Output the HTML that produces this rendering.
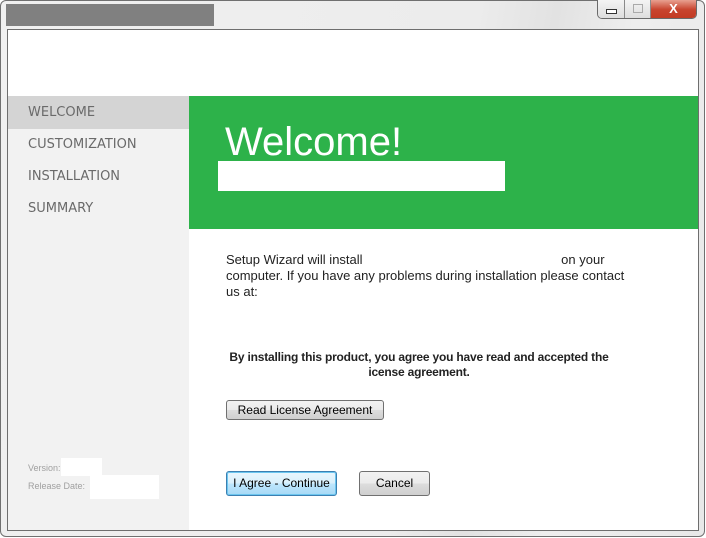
<!DOCTYPE html>
<html><head><meta charset="utf-8"><style>
*{margin:0;padding:0;box-sizing:border-box}
body{width:706px;height:538px;overflow:hidden;background:#fff;font-family:"Liberation Sans",sans-serif;position:relative}
.abs{position:absolute}
#frame{left:0;top:0;width:705px;height:537px;border:1px solid #707070;border-radius:6px;background:linear-gradient(100deg,#f0f0f0 0%,#ececec 60%,#e2e2e2 70%,#eeeeee 80%,#e8e8e8 100%)}
#client{left:7px;top:29px;width:692px;height:502px;border:1px solid #6e6e6e;background:#fff}
.btn{border:1px solid #707070;border-radius:3px;background:linear-gradient(#f2f2f2,#ebebeb 50%,#dddddd 51%,#cfcfcf);font-size:12px;color:#000;text-align:center}
.nav{left:28px;font-size:13px;color:#6a6a6a;font-family:"DejaVu Sans","Liberation Sans",sans-serif;letter-spacing:0}
</style></head><body>
<div id="frame" class="abs"></div>
<div class="abs" style="left:6px;top:4px;width:208px;height:22px;background:#808080"></div>
<div class="abs" style="left:597px;top:0;width:100px;height:19px;border:1px solid #6a6a6a;border-top:none;border-radius:0 0 5px 5px;overflow:hidden;display:flex">
 <div style="width:27px;height:19px;background:linear-gradient(#f4f4f4,#dcdcdc);border-right:1px solid #8a8a8a;position:relative"><div style="position:absolute;left:8px;top:9px;width:11px;height:5px;border:1px solid #333;background:#fff"></div></div>
 <div style="width:26px;height:19px;background:linear-gradient(#f4f4f4,#dcdcdc);border-right:1px solid #8a8a8a;position:relative"><div style="position:absolute;left:8px;top:4px;width:10px;height:9px;border:1px solid #aaa"></div></div>
 <div style="flex:1;height:19px;background:linear-gradient(#e8a090,#c8452f 50%,#c23a22);color:#fff;font-weight:bold;font-size:13px;text-align:center;line-height:18px">X</div>
</div>
<div id="client" class="abs"></div>
<div class="abs" style="left:8px;top:96px;width:181px;height:434px;background:#f2f2f2"></div>
<div class="abs" style="left:8px;top:96px;width:181px;height:33px;background:#d4d4d4"></div>
<div class="abs nav" style="top:105px">WELCOME</div>
<div class="abs nav" style="top:137px">CUSTOMIZATION</div>
<div class="abs nav" style="top:169px">INSTALLATION</div>
<div class="abs nav" style="top:201px">SUMMARY</div>
<div class="abs" style="left:28px;top:463px;font-size:9px;color:#a0a0a0">Version:</div>
<div class="abs" style="left:61px;top:458px;width:41px;height:18px;background:#fff"></div>
<div class="abs" style="left:28px;top:481px;font-size:9px;color:#a0a0a0">Release Date:</div>
<div class="abs" style="left:90px;top:475px;width:69px;height:24px;background:#fff"></div>
<div class="abs" style="left:189px;top:96px;width:509px;height:133px;background:#2db24a"></div>
<div class="abs" style="left:225px;top:119px;font-size:40px;color:#fff;line-height:46px">Welcome!</div>
<div class="abs" style="left:218px;top:161px;width:287px;height:30px;background:#fff"></div>
<div class="abs" style="left:226px;top:252px;width:420px;font-size:13px;color:#222;line-height:16px;white-space:nowrap">Setup Wizard will install <span style="display:inline-block;width:195px"></span>on your<br>computer. If you have any problems during installation please contact<br>us at:</div>
<div class="abs" style="left:226px;top:350px;width:386px;font-size:12px;font-weight:bold;color:#222;line-height:15px;text-align:center;white-space:nowrap;letter-spacing:-0.2px">By installing this product, you agree you have read and accepted the<br>icense agreement.</div>
<div class="abs btn" style="left:226px;top:400px;width:158px;height:20px;line-height:18px">Read License Agreement</div>
<div class="abs btn" style="left:226px;top:471px;width:111px;height:25px;line-height:23px;border-color:#3c7fb1;background:linear-gradient(#eaf6fd,#d9f0fc 50%,#bee6fd 51%,#a7d9f5);box-shadow:inset 0 0 0 1px #6cc6ef">I Agree - Continue</div>
<div class="abs btn" style="left:359px;top:471px;width:71px;height:25px;line-height:23px">Cancel</div>
</body></html>
